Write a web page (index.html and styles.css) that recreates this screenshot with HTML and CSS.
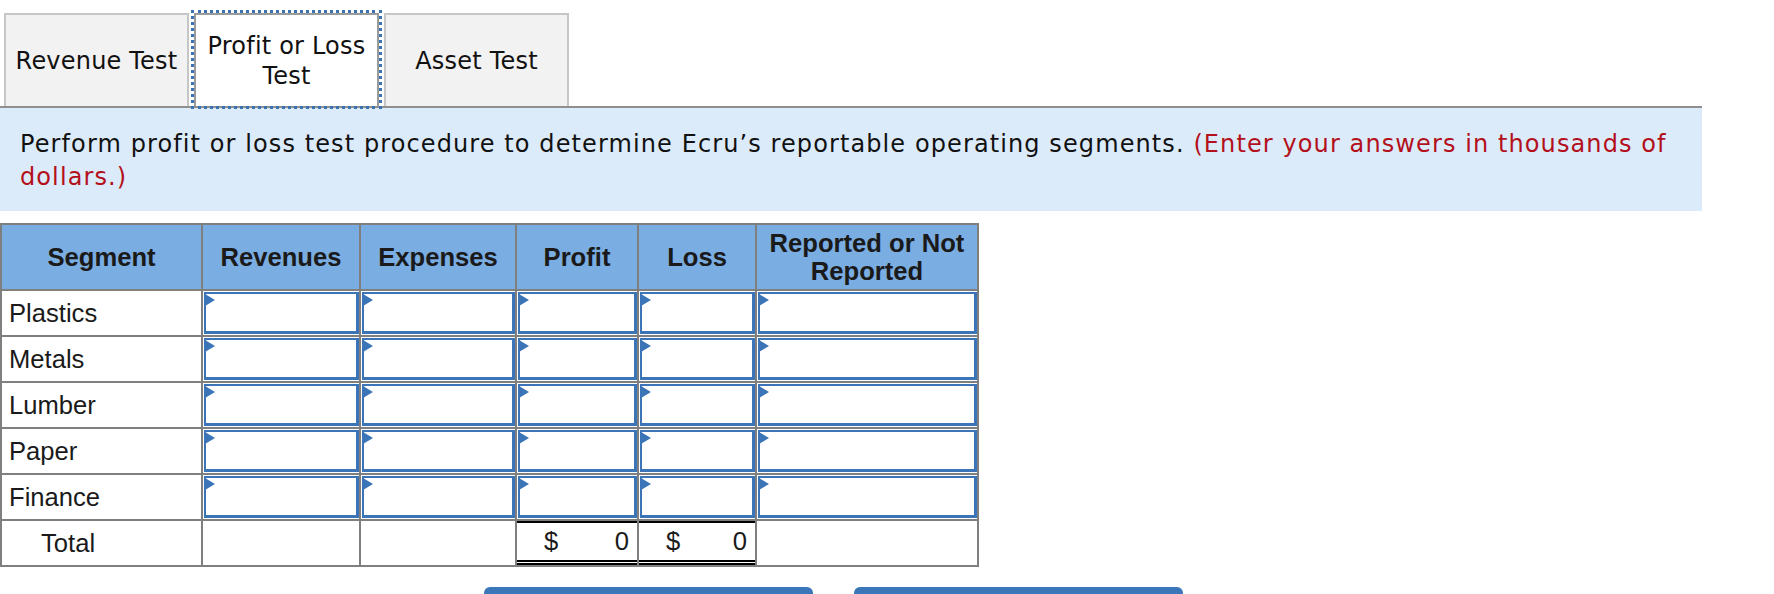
FILE: index.html
```html
<!DOCTYPE html>
<html lang="en">
<head>
<meta charset="utf-8">
<title>Profit or Loss Test</title>
<link rel="stylesheet" href="styles.css">
</head>
<body>
<div class="page">
  <div class="tabs">
    <button class="tab">Revenue Test</button>
    <button class="tab active">Profit or Loss Test</button>
    <button class="tab">Asset Test</button>
  </div>
  <div class="panel">
    <p>Perform profit or loss test procedure to determine Ecru’s reportable operating segments. <span class="note">(Enter your answers in thousands of dollars.)</span></p>
  </div>
  <table class="grid">
    <colgroup>
      <col class="c-seg"><col class="c-rev"><col class="c-exp"><col class="c-pro"><col class="c-los"><col class="c-rep">
    </colgroup>
    <thead>
      <tr>
        <th>Segment</th><th>Revenues</th><th>Expenses</th><th>Profit</th><th>Loss</th><th>Reported or Not Reported</th>
      </tr>
    </thead>
    <tbody>
      <tr><td class="label">Plastics</td><td><div class="inp"></div></td><td><div class="inp"></div></td><td><div class="inp"></div></td><td><div class="inp"></div></td><td><div class="inp"></div></td></tr>
      <tr><td class="label">Metals</td><td><div class="inp"></div></td><td><div class="inp"></div></td><td><div class="inp"></div></td><td><div class="inp"></div></td><td><div class="inp"></div></td></tr>
      <tr><td class="label">Lumber</td><td><div class="inp"></div></td><td><div class="inp"></div></td><td><div class="inp"></div></td><td><div class="inp"></div></td><td><div class="inp"></div></td></tr>
      <tr><td class="label">Paper</td><td><div class="inp"></div></td><td><div class="inp"></div></td><td><div class="inp"></div></td><td><div class="inp"></div></td><td><div class="inp"></div></td></tr>
      <tr><td class="label">Finance</td><td><div class="inp"></div></td><td><div class="inp"></div></td><td><div class="inp"></div></td><td><div class="inp"></div></td><td><div class="inp"></div></td></tr>
      <tr class="total">
        <td class="label indent">Total</td><td></td><td></td>
        <td><div class="sum"><span>$</span><span>0</span></div></td>
        <td><div class="sum"><span>$</span><span>0</span></div></td>
        <td></td>
      </tr>
    </tbody>
  </table>
  <div class="actions">
    <button class="btn"></button>
    <button class="btn"></button>
  </div>
</div>
</body>
</html>
```
FILE: styles.css
```css
html, body {
  margin: 0;
  padding: 0;
  background: #ffffff;
}
body {
  font-family: "DejaVu Sans", Verdana, sans-serif;
  color: #111;
  overflow: hidden;
}
.page {
  width: 1702px;
  padding-top: 13px;
}
.tabs {
  display: flex;
  gap: 5px;
  padding-left: 4px;
  height: 93px;
}
.tab {
  width: 185px;
  height: 93px;
  box-sizing: border-box;
  background: #f2f2f2;
  border: 2px solid #c6c6c6;
  border-bottom: none;
  font-family: "DejaVu Sans", Verdana, sans-serif;
  font-size: 24px;
  letter-spacing: 0.2px;
  line-height: 30px;
  color: #111;
  padding: 0 1px;
  margin: 0;
  text-align: center;
  white-space: normal;
}
.tab.active {
  background: #ffffff;
  border-color: #9a9a9a;
  outline: 3px dotted #3a72b6;
  outline-offset: 0;
  padding: 0 8px;
}
.panel {
  background: #dcebf9;
  border-top: 2px solid #8f8f8f;
  padding: 20px 20px 17px 20px;
}
.panel p {
  margin: 0;
  font-size: 24px;
  letter-spacing: 1.1px;
  line-height: 33px;
  color: #111;
}
.note {
  color: #b3101c;
}
.grid {
  margin-top: 12px;
  border-collapse: collapse;
  table-layout: fixed;
  width: 977px;
  border: 2px solid #7f7f7f;
  font-family: "Liberation Sans", Arial, sans-serif;
  font-size: 25.6px;
  color: #1a1a1a;
}
.c-seg { width: 201px; }
.c-rev { width: 158px; }
.c-exp { width: 156px; }
.c-pro { width: 122px; }
.c-los { width: 118px; }
.c-rep { width: 222px; }
.grid th {
  background: #7aade1;
  border: 2px solid #7f7f7f;
  height: 64px;
  padding: 0 4px;
  font-weight: bold;
  line-height: 28px;
  text-align: center;
  color: #1a1a1a;
}
.grid td {
  border: 2px solid #7f7f7f;
  padding: 0;
  height: 44px;
  vertical-align: middle;
}
.grid td.label {
  padding-left: 7px;
}
.grid td.indent {
  padding-left: 39px;
}
.inp {
  position: relative;
  height: 42px;
  margin: 1px 0 1px 1px;
  box-sizing: border-box;
  border: 3px solid #3b74b7;
  border-top-width: 2px;
  border-left-width: 2px;
  background: #fff;
}
.inp::before {
  content: "";
  position: absolute;
  left: -1px;
  top: 0;
  border-left: 10px solid #3b74b7;
  border-top: 6px solid transparent;
  border-bottom: 6px solid transparent;
}
.sum {
  height: 44px;
  box-sizing: border-box;
  border-top: 2px solid #000;
  border-bottom: 5px double #000;
  display: flex;
  align-items: center;
  justify-content: space-between;
  padding: 0 8px 0 27px;
  color: #1a1a1a;
}
.actions {
  display: flex;
  gap: 41px;
  padding-left: 484px;
  margin-top: 20px;
}
.btn {
  width: 329px;
  height: 48px;
  border: none;
  border-radius: 6px;
  background: #3b76b9;
  padding: 0;
  margin: 0;
}
```
